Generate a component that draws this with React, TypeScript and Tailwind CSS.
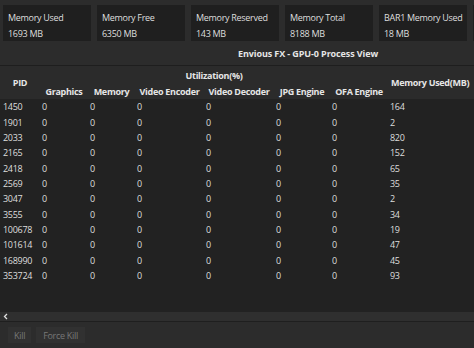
import React from "react";

const cards = [
  ["Memory Used", "1693 MB"],
  ["Memory Free", "6350 MB"],
  ["Memory Reserved", "143 MB"],
  ["Memory Total", "8188 MB"],
  ["BAR1 Memory Used", "18 MB"],
  ["", ""],
];

const rows: [string, string][] = [
  ["1450", "164"],
  ["1901", "2"],
  ["2033", "820"],
  ["2165", "152"],
  ["2418", "65"],
  ["2569", "35"],
  ["3047", "2"],
  ["3555", "34"],
  ["100678", "19"],
  ["101614", "47"],
  ["168990", "45"],
  ["353724", "93"],
];

const cols = [
  { name: "Graphics", w: "w-[48px]" },
  { name: "Memory", w: "w-[47px]" },
  { name: "Video Encoder", w: "w-[69px]" },
  { name: "Video Decoder", w: "w-[70px]" },
  { name: "JPG Engine", w: "w-[56px]" },
  { name: "OFA Engine", w: "w-[58px]" },
];

export default function App() {
  return (
    <div
      className="w-[474px] h-[348px] bg-[#2c2c2c] text-[#dedede] overflow-hidden flex flex-col text-[9px] tracking-[-0.3px] leading-none"
      style={{ fontFamily: '"Open Sans", "Noto Sans", sans-serif' }}
    >
      <div className="w-[640px] flex gap-[6px] pl-[3px] pt-[5px] pb-[1px] shrink-0">
        {cards.map(([l, v], i) => (
          <div key={i} className="w-[88px] h-[36px] bg-[#1f1f1f] flex flex-col pl-[5px] pt-[8px] gap-[7px] whitespace-nowrap">
            <span>{l}</span>
            <span>{v}</span>
          </div>
        ))}
      </div>
      <div className="w-[640px] h-[24px] shrink-0 flex items-center pl-[238px] font-bold tracking-[-0.1px] text-[#e6e6e6] border-b border-[#1e1e1e]">
        Envious FX - GPU-0 Process View
      </div>
      <div className="flex-1 bg-[#222222] flex flex-col min-h-0">
        <div className="flex h-[33px] bg-[#2b2b2b] font-bold text-[#e6e6e6] shrink-0">
          <div className="w-[40px] flex items-center justify-center">PID</div>
          <div className="flex flex-col">
            <div className="h-[18px] flex items-center justify-center">Utilization(%)</div>
            <div className="flex h-[15px]">
              {cols.map((c) => (
                <div key={c.name} className={`${c.w} flex items-center justify-center whitespace-nowrap`}>
                  {c.name}
                </div>
              ))}
            </div>
          </div>
          <div className="w-[86px] flex items-center pl-[3px] whitespace-nowrap">Memory Used(MB)</div>
        </div>
        <div className="flex flex-col">
          {rows.map(([pid, mem]) => (
            <div key={pid} className="flex h-[15.36px] items-center">
              <div className="w-[40px] pl-[3px]">{pid}</div>
              {cols.map((c) => (
                <div key={c.name} className={`${c.w} pl-[2px]`}>
                  0
                </div>
              ))}
              <div className="pl-[2px]">{mem}</div>
            </div>
          ))}
        </div>
      </div>
      <div className="h-[10px] bg-[#2f2f2f] flex items-center pl-[3px] shrink-0 border-b border-[#1f1f1f]">
        <svg width="5" height="7" viewBox="0 0 5 7">
          <path d="M4 1 L1.5 3.5 L4 6" stroke="#e0e0e0" strokeWidth="1.3" fill="none" />
        </svg>
      </div>
      <div className="h-[26px] bg-[#2c2c2c] flex items-center gap-[5px] pl-[8px] shrink-0 text-[#777777]">
        <div className="h-[16px] px-[6px] bg-[#313131] flex items-center">Kill</div>
        <div className="h-[16px] px-[7px] bg-[#313131] flex items-center">Force Kill</div>
      </div>
    </div>
  );
}
